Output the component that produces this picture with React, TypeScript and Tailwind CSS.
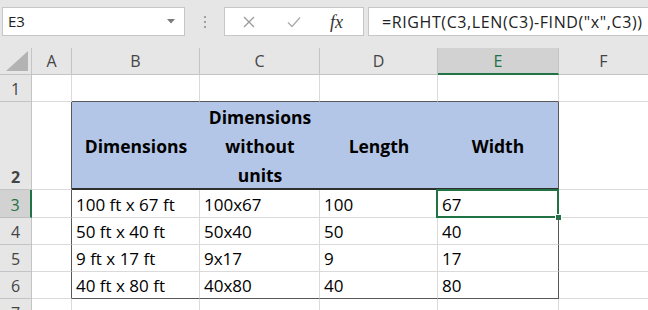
import React from 'react';

const ui = "font-['Open_Sans','Liberation_Sans',sans-serif]";

function RowHead({ n, selected }: { n: string; selected?: boolean }) {
  return (
    <div
      className={`w-[32px] shrink-0 flex items-end justify-center pb-[0px] text-[16px] border-b border-r ${
        selected
          ? 'bg-[#d2d2d2] text-[#217346] border-b-[#bdbdbd] border-r-2 border-r-[#217346]'
          : 'bg-[#e6e6e6] text-[#444] border-[#c4c4c4]'
      }`}
    >
      {n}
    </div>
  );
}

const data = [
  ['100 ft x 67 ft', '100x67', '100', '67'],
  ['50 ft x 40 ft', '50x40', '50', '40'],
  ['9 ft x 17 ft', '9x17', '9', '17'],
  ['40 ft x 80 ft', '40x80', '40', '80'],
];

export default function App() {
  return (
    <div className={`w-[648px] h-[310px] overflow-hidden bg-white ${ui}`}>
      {/* Formula bar */}
      <div className="h-[48px] bg-[#e6e6e6] flex items-start pt-[7px] pl-[2px]">
        <div className="w-[183px] h-[29px] bg-white border border-[#c6c6c6] flex items-center justify-between pl-[5px] pr-[9px] text-[15px] text-[#222]">
          <span>E3</span>
          <svg width="8" height="5" viewBox="0 0 8 5">
            <path d="M0 0 L8 0 L4 4.5 Z" fill="#7a7a7a" />
          </svg>
        </div>
        <div className="w-[39px] h-[29px] flex flex-col items-center justify-center gap-[3px]">
          <span className="w-[2px] h-[2px] bg-[#a0a0a0]" />
          <span className="w-[2px] h-[2px] bg-[#a0a0a0]" />
          <span className="w-[2px] h-[2px] bg-[#a0a0a0]" />
        </div>
        <div className="w-[140px] h-[29px] bg-white border border-[#c6c6c6] flex items-center pl-[18px]">
          <svg width="12" height="12" viewBox="0 0 12 12">
            <path d="M1 1 L11 11 M11 1 L1 11" stroke="#9a9a9a" strokeWidth="1.3" />
          </svg>
          <svg className="ml-[32px]" width="14" height="12" viewBox="0 0 14 12">
            <path d="M1 6.5 L5 10.5 L13 1.5" stroke="#aaaaaa" strokeWidth="1.3" fill="none" />
          </svg>
          <span className="ml-[29px] font-['Liberation_Serif',serif] italic text-[18px] text-[#333] leading-none">fx</span>
        </div>
        <div className="ml-[4px] flex-1 h-[29px] bg-white border border-[#c6c6c6] border-r-0 flex items-center pl-[13px] text-[16px] tracking-[0.6px] text-[#222] whitespace-nowrap">
          =RIGHT(C3,LEN(C3)-FIND("x",C3))
        </div>
      </div>

      {/* Column headers */}
      <div className="flex h-[27px] text-[16px] text-[#444]">
        <div className="w-[32px] shrink-0 bg-[#e6e6e6] border-r border-b border-[#c4c4c4] flex items-end justify-end">
          <svg width="22" height="20" viewBox="0 0 22 20" className="mr-[3px] mb-[3px]">
            <path d="M22 0 L22 20 L0 20 Z" fill="#b3b3b3" />
          </svg>
        </div>
        <div className="w-[40px] shrink-0 bg-[#e6e6e6] border-r border-b border-[#c4c4c4] flex items-center justify-center">A</div>
        <div className="w-[128px] shrink-0 bg-[#e6e6e6] border-r border-b border-[#c4c4c4] flex items-center justify-center">B</div>
        <div className="w-[120px] shrink-0 bg-[#e6e6e6] border-r border-b border-[#c4c4c4] flex items-center justify-center">C</div>
        <div className="w-[118px] shrink-0 bg-[#e6e6e6] border-r border-b border-[#c4c4c4] flex items-center justify-center">D</div>
        <div className="w-[121px] shrink-0 bg-[#d2d2d2] border-r border-r-[#c4c4c4] border-b-2 border-b-[#217346] text-[#217346] flex items-center justify-center">E</div>
        <div className="flex-1 bg-[#e6e6e6] border-b border-[#c4c4c4] flex items-center justify-center">F</div>
      </div>

      {/* Row 1 */}
      <div className="flex h-[27px]">
        <RowHead n="1" />
        <div className="w-[40px] shrink-0 border-r border-b border-[#dadada]" />
        <div className="w-[128px] shrink-0 border-r border-r-[#dadada] border-b border-b-[#595959]" />
        <div className="w-[120px] shrink-0 border-r border-r-[#dadada] border-b border-b-[#595959]" />
        <div className="w-[118px] shrink-0 border-r border-r-[#dadada] border-b border-b-[#595959]" />
        <div className="w-[121px] shrink-0 border-r border-r-[#dadada] border-b border-b-[#595959]" />
        <div className="flex-1 border-b border-[#dadada]" />
      </div>

      {/* Row 2: table header */}
      <div className="flex h-[88px] text-[17.5px] font-bold text-black">
        <RowHead n="2" />
        <div className="w-[40px] shrink-0 border-r border-r-[#595959] border-b border-b-[#dadada]" />
        <div className="w-[128px] shrink-0 bg-[#b4c6e7] border-b-2 border-b-[#2f2f2f] flex items-center justify-center pt-[3px]">Dimensions</div>
        <div className="w-[120px] shrink-0 bg-[#b4c6e7] border-b-2 border-b-[#2f2f2f] flex items-center justify-center text-center leading-[29px] pt-[3px]">
          Dimensions<br />without<br />units
        </div>
        <div className="w-[118px] shrink-0 bg-[#b4c6e7] border-b-2 border-b-[#2f2f2f] flex items-center justify-center pt-[3px]">Length</div>
        <div className="w-[121px] shrink-0 bg-[#b4c6e7] border-r border-r-[#595959] border-b-2 border-b-[#2f2f2f] flex items-center justify-center pt-[3px]">Width</div>
        <div className="flex-1 border-b border-[#dadada]" />
      </div>

      {/* Data rows */}
      {data.map((r, i) => {
        const last = i === data.length - 1;
        const bottom = last ? 'border-b-[#595959]' : 'border-b-[#dadada]';
        return (
          <div key={i} className={`flex ${i === 0 ? 'h-[28px]' : 'h-[27px]'} text-[17px] text-black`}>
            <RowHead n={String(i + 3)} selected={i === 0} />
            <div className="w-[40px] shrink-0 border-r border-r-[#595959] border-b border-b-[#dadada]" />
            <div className={`w-[128px] shrink-0 border-r border-r-[#dadada] border-b ${bottom} flex items-end pl-[4px] whitespace-nowrap`}>{r[0]}</div>
            <div className={`w-[120px] shrink-0 border-r border-r-[#dadada] border-b ${bottom} flex items-end pl-[4px]`}>{r[1]}</div>
            <div className={`w-[118px] shrink-0 border-r border-r-[#dadada] border-b ${bottom} flex items-end pl-[4px]`}>{r[2]}</div>
            <div className={`relative w-[121px] shrink-0 border-r border-r-[#595959] border-b ${bottom} flex items-end pl-[4px]`}>
              {r[3]}
              {i === 0 && (
                <>
                  <div className="absolute -left-[2px] -top-[1px] -right-[1px] -bottom-[1px] border-2 border-[#217346]" />
                  <div className="absolute -right-[4px] -bottom-[4px] w-[7px] h-[7px] bg-[#217346] border border-white" />
                </>
              )}
            </div>
            <div className="flex-1 border-b border-[#dadada]" />
          </div>
        );
      })}

      {/* Row 7 */}
      <div className="flex h-[27px]">
        <RowHead n="7" />
        <div className="w-[40px] shrink-0 border-r border-b border-[#dadada]" />
        <div className="w-[128px] shrink-0 border-r border-b border-[#dadada]" />
        <div className="w-[120px] shrink-0 border-r border-b border-[#dadada]" />
        <div className="w-[118px] shrink-0 border-r border-b border-[#dadada]" />
        <div className="w-[121px] shrink-0 border-r border-b border-[#dadada]" />
        <div className="flex-1 border-b border-[#dadada]" />
      </div>
    </div>
  );
}
